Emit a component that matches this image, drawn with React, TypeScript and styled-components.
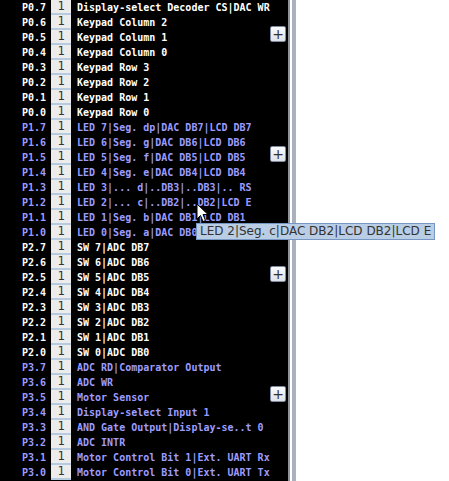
import React from 'react'
import styled, { createGlobalStyle } from 'styled-components'

const GlobalStyle = createGlobalStyle`
  html, body {
    margin: 0;
    padding: 0;
    background: #ffffff;
  }
`

type Pin = { name: string; desc: string }
type Port = { pins: Pin[]; color: string }

const ports: Port[] = [
  {
    color: '#ffffff',
    pins: [
      { name: 'P0.7', desc: 'Display-select Decoder CS|DAC WR' },
      { name: 'P0.6', desc: 'Keypad Column 2' },
      { name: 'P0.5', desc: 'Keypad Column 1' },
      { name: 'P0.4', desc: 'Keypad Column 0' },
      { name: 'P0.3', desc: 'Keypad Row 3' },
      { name: 'P0.2', desc: 'Keypad Row 2' },
      { name: 'P0.1', desc: 'Keypad Row 1' },
      { name: 'P0.0', desc: 'Keypad Row 0' },
    ],
  },
  {
    color: '#9c9cff',
    pins: [
      { name: 'P1.7', desc: 'LED 7|Seg. dp|DAC DB7|LCD DB7' },
      { name: 'P1.6', desc: 'LED 6|Seg. g|DAC DB6|LCD DB6' },
      { name: 'P1.5', desc: 'LED 5|Seg. f|DAC DB5|LCD DB5' },
      { name: 'P1.4', desc: 'LED 4|Seg. e|DAC DB4|LCD DB4' },
      { name: 'P1.3', desc: 'LED 3|... d|..DB3|..DB3|.. RS' },
      { name: 'P1.2', desc: 'LED 2|... c|..DB2|..DB2|LCD E' },
      { name: 'P1.1', desc: 'LED 1|Seg. b|DAC DB1|LCD DB1' },
      { name: 'P1.0', desc: 'LED 0|Seg. a|DAC DB0|LCD DB0' },
    ],
  },
  {
    color: '#ffffff',
    pins: [
      { name: 'P2.7', desc: 'SW 7|ADC DB7' },
      { name: 'P2.6', desc: 'SW 6|ADC DB6' },
      { name: 'P2.5', desc: 'SW 5|ADC DB5' },
      { name: 'P2.4', desc: 'SW 4|ADC DB4' },
      { name: 'P2.3', desc: 'SW 3|ADC DB3' },
      { name: 'P2.2', desc: 'SW 2|ADC DB2' },
      { name: 'P2.1', desc: 'SW 1|ADC DB1' },
      { name: 'P2.0', desc: 'SW 0|ADC DB0' },
    ],
  },
  {
    color: '#9c9cff',
    pins: [
      { name: 'P3.7', desc: 'ADC RD|Comparator Output' },
      { name: 'P3.6', desc: 'ADC WR' },
      { name: 'P3.5', desc: 'Motor Sensor' },
      { name: 'P3.4', desc: 'Display-select Input 1' },
      { name: 'P3.3', desc: 'AND Gate Output|Display-se..t 0' },
      { name: 'P3.2', desc: 'ADC INTR' },
      { name: 'P3.1', desc: 'Motor Control Bit 1|Ext. UART Rx' },
      { name: 'P3.0', desc: 'Motor Control Bit 0|Ext. UART Tx' },
    ],
  },
]

const App = () => {
  return (
    <Page>
      <GlobalStyle />
      <Panel>
        {ports.map((port, i) => (
          <Group key={i}>
            {port.pins.map((pin) => (
              <Row key={pin.name}>
                <PinName color={port.color}>{pin.name}</PinName>
                <Bit>1</Bit>
                <Desc color={port.color}>{pin.desc}</Desc>
              </Row>
            ))}
            <Expand>+</Expand>
          </Group>
        ))}
        <Cursor width="13" height="20" viewBox="0 0 13 20">
          <path d="M1 1 L1 16 L4.5 12.5 L7 18.5 L9.5 17.5 L7 11.5 L12 11.5 Z" fill="#fff" stroke="#000" strokeWidth="1" strokeLinejoin="round" />
        </Cursor>
        <Tooltip>LED 2|Seg. c|DAC DB2|LCD DB2|LCD E</Tooltip>
      </Panel>
      <Edge />
    </Page>
  )
}

export default App

const Page = styled.div`
  display: flex;
  width: 449px;
  height: 481px;
  overflow: hidden;
`

const Panel = styled.div`
  position: relative;
  width: 288px;
  height: 481px;
  background-color: #000000;
  display: flex;
  flex-direction: column;
`

const Edge = styled.div`
  width: 2px;
  height: 481px;
  background-color: #8d949c;
  border-right: 2px solid #ffffff;
  box-shadow: 3px 0 0 #a8b0bc, 4px 0 0 #c4ae96;
`

const Group = styled.div`
  position: relative;
  display: flex;
  flex-direction: column;
`

const Row = styled.div`
  display: flex;
  height: 15px;
  align-items: stretch;
  font-family: 'DejaVu Sans Mono', monospace;
  font-size: 10px;
  font-weight: 700;
  line-height: 15px;
  white-space: nowrap;
`

const PinName = styled.div<{ color: string }>`
  width: 46px;
  text-align: right;
  color: ${(p) => p.color};
`

const Bit = styled.div`
  width: 20px;
  margin-left: 5px;
  height: 13px;
  line-height: 13px;
  background-color: #ececec;
  border-bottom: 2px solid #b6cbe0;
  color: #333333;
  font-weight: 400;
  font-size: 12px;
  text-align: center;
`

const Desc = styled.div<{ color: string }>`
  margin-left: 6px;
  color: ${(p) => p.color};
`

const Expand = styled.div`
  position: absolute;
  top: 26px;
  left: 270px;
  width: 14px;
  height: 14px;
  border: 1px solid #7d8ca3;
  border-radius: 2px;
  background: linear-gradient(#fbfbfb, #dfe3e8);
  color: #333333;
  font-family: 'DejaVu Sans', sans-serif;
  font-size: 14px;
  line-height: 14px;
  text-align: center;
`

const Tooltip = styled.div`
  position: absolute;
  left: 196px;
  top: 223px;
  z-index: 3;
  height: 15px;
  padding: 0 3px;
  background-color: #b9cde5;
  border: 1px solid #7896c4;
  color: #333333;
  font-family: 'DejaVu Sans', sans-serif;
  font-size: 12px;
  line-height: 15px;
  white-space: nowrap;
`

const Cursor = styled.svg`
  position: absolute;
  left: 196px;
  top: 203px;
  z-index: 2;
`
